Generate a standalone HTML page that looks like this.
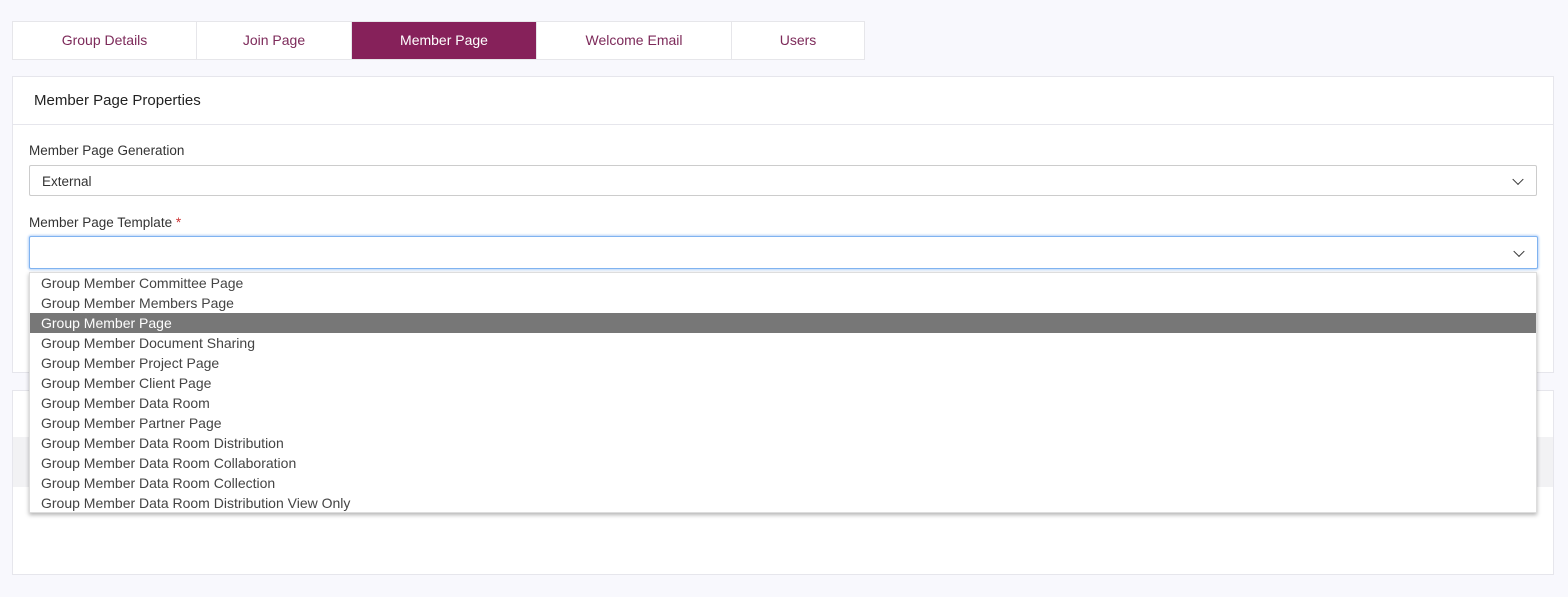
<!DOCTYPE html>
<html><head><meta charset="utf-8"><style>
*{box-sizing:border-box;margin:0;padding:0}
body{width:1568px;height:597px;background:#f8f8fd;font-family:"Liberation Sans",sans-serif;position:relative;overflow:hidden;color:#333}
.abs{position:absolute}
.tabs{left:12px;top:21px;height:39px;display:flex;border:1px solid #e6e6ea;background:#fff}
.tab{height:37px;line-height:37px;text-align:center;font-size:14px;color:#7d2a5a;border-right:1px solid #e6e6ea}
.tab.act{background:#86215a;color:#fff}
.card{background:#fff;border:1px solid #e6e6ec}
.sel{background:#fff;border:1px solid #ccc;border-radius:2px}
.chev{position:absolute;right:14px;top:50%;width:8px;height:8px;border-right:1.5px solid #333;border-bottom:1.5px solid #333;transform:translateY(-70%) rotate(45deg)}
.dd{left:29px;top:272px;width:1508px;height:241px;background:#fff;box-shadow:0 2px 4px rgba(0,0,0,.3);border:1px solid #ddd}
.it{height:20px;line-height:20px;padding-left:11px;font-size:14px;color:#444}
.it.hl{background:#777;color:#fff}
</style></head><body>
<div class="abs tabs">
<div class="tab" style="width:184px">Group Details</div>
<div class="tab" style="width:155px">Join Page</div>
<div class="tab act" style="width:185px">Member Page</div>
<div class="tab" style="width:195px">Welcome Email</div>
<div class="tab" style="width:132px;border-right:none">Users</div>
</div>
<div class="abs card" style="left:12px;top:76px;width:1542px;height:297px">
<div style="height:48px;border-bottom:1px solid #e6e6ec;padding:15px 0 0 21px;font-size:15px;color:#222">Member Page Properties</div>
</div>
<div class="abs" style="left:29px;top:143px;font-size:13.5px;color:#333">Member Page Generation</div>
<div class="abs sel" style="left:29px;top:165px;width:1508px;height:31px"><span style="position:absolute;left:12px;top:8px;font-size:13.5px">External</span><div class="chev"></div></div>
<div class="abs" style="left:29px;top:215px;font-size:13.5px;color:#333">Member Page Template <span style="color:#c33">*</span></div>
<div class="abs sel" style="left:29px;top:236px;width:1509px;height:33px;border:1px solid #80b3f0;box-shadow:0 0 2px 1px #b8d4f8"><div class="chev"></div></div>
<div class="abs card" style="left:12px;top:390px;width:1542px;height:185px">
<div style="position:absolute;left:0;right:0;top:46px;height:50px;background:#f2f2f4"></div>
</div>
<div class="abs dd">
<div class="it">Group Member Committee Page</div>
<div class="it">Group Member Members Page</div>
<div class="it hl">Group Member Page</div>
<div class="it">Group Member Document Sharing</div>
<div class="it">Group Member Project Page</div>
<div class="it">Group Member Client Page</div>
<div class="it">Group Member Data Room</div>
<div class="it">Group Member Partner Page</div>
<div class="it">Group Member Data Room Distribution</div>
<div class="it">Group Member Data Room Collaboration</div>
<div class="it">Group Member Data Room Collection</div>
<div class="it">Group Member Data Room Distribution View Only</div>
</div>
</body></html>
